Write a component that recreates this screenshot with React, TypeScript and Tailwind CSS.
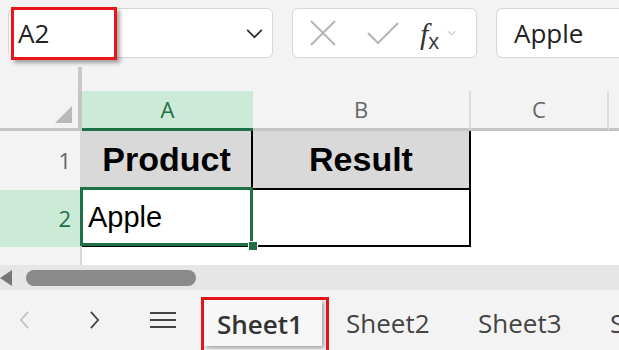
import React from 'react';

const ui = "font-['Open_Sans',sans-serif]";
const cell = "font-['Liberation_Sans',Arial,sans-serif]";

function Chevron({ className }: { className?: string }) {
  return (
    <svg viewBox="0 0 20 12" className={className} fill="none" stroke="currentColor" strokeWidth="2">
      <path d="M2 2 L10 10 L18 2" />
    </svg>
  );
}

function TopBar() {
  return (
    <div className="h-[91px] flex flex-col">
      <div className="flex items-start pt-[8px] pl-[8px] gap-[19px] h-[58px]">
        <div className="relative shrink-0 w-[265px] h-[50px] bg-white border border-[#d6d6d6] rounded-[6px] flex items-center pl-[9px] pr-[8px]">
          <span className={`${ui} text-[26px] text-[#222] flex-1`}>A2</span>
          <Chevron className="w-[19px] h-[11px] text-[#333]" />
          <div className="absolute left-[2px] top-[-2px] w-[106px] h-[53px] border-[3px] border-[#e8151b] shadow-[3px_3px_4px_rgba(0,0,0,0.35)]" />
        </div>
        <div className="shrink-0 w-[185px] h-[50px] bg-white border border-[#d6d6d6] rounded-[6px] flex items-center pl-[16px]">
          <svg viewBox="0 0 28 28" className="w-[28px] h-[28px] text-[#b5b5b5]" fill="none" stroke="currentColor" strokeWidth="2">
            <path d="M2 2 L26 26 M26 2 L2 26" />
          </svg>
          <svg viewBox="0 0 34 24" className="ml-[29px] w-[34px] h-[24px] text-[#b5b5b5]" fill="none" stroke="currentColor" strokeWidth="2">
            <path d="M2 12 L12 22 L32 2" />
          </svg>
          <span className="ml-[20px] flex items-end text-[#333] h-[30px]">
            <span className="font-['Liberation_Serif',serif] italic text-[30px] leading-[28px]">f</span>
            <span className={`${ui} text-[21px] leading-[20px] mb-[-3px]`}>x</span>
          </span>
          <Chevron className="ml-[8px] w-[9px] h-[6px] text-[#999]" />
        </div>
        <div className="flex-1 h-[50px] bg-white border border-[#d6d6d6] border-r-0 rounded-l-[6px] flex items-center pl-[17px]">
          <span className={`${ui} text-[26px] text-[#222]`}>Apple</span>
        </div>
      </div>
      <div className="h-[33px]">
        <div className="ml-[78px] mt-[9px] w-[4px] h-[24px] bg-[#c9c9c9]" />
      </div>
    </div>
  );
}

function HeaderRow() {
  return (
    <div className={`flex h-[40px] ${ui}`}>
      <div className="w-[82px] border-b-[3px] border-r-[4px] border-[#c4c4c4] flex items-end justify-end pr-[6px] pb-[5px]">
        <svg viewBox="0 0 16 16" className="w-[17px] h-[17px]">
          <path d="M16 0 L16 16 L0 16 Z" fill="#b9b9b9" />
        </svg>
      </div>
      <div className="w-[171px] bg-[#cbead7] border-b-[3px] border-[#1e7145] flex items-center justify-center text-[22px] text-[#1e7145]">
        A
      </div>
      <div className="w-[218px] border-b-[3px] border-r-2 border-r-[#dcdcdc] border-b-[#c4c4c4] flex items-center justify-center text-[22px] text-[#666]">
        B
      </div>
      <div className="w-[138px] border-b-[3px] border-r-2 border-r-[#dcdcdc] border-b-[#c4c4c4] flex items-center justify-center text-[22px] text-[#666]">
        C
      </div>
      <div className="flex-1 border-b-[3px] border-[#c4c4c4]" />
    </div>
  );
}

function Grid() {
  return (
    <div className="flex flex-col">
      <HeaderRow />
      <div className="flex h-[59px]">
        <div className={`w-[82px] border-r-2 border-[#d8d8d8] flex items-center justify-end pr-[9px] text-[22px] text-[#666] ${ui}`}>1</div>
        <div className={`w-[171px] bg-[#d9d9d9] border-r-2 border-b-2 border-black flex items-center justify-center ${cell} font-bold text-[34px] text-black`}>
          Product
        </div>
        <div className={`w-[218px] bg-[#d9d9d9] border-r-2 border-b-2 border-black flex items-center justify-center ${cell} font-bold text-[34px] text-black`}>
          Result
        </div>
        <div className="flex-1 bg-white" />
      </div>
      <div className="flex h-[57px]">
        <div className={`w-[82px] bg-[#cbead7] border-r-2 border-[#b8dcc6] flex items-center justify-end pr-[9px] text-[22px] text-[#1e7145] ${ui}`}>2</div>
        <div className={`relative w-[171px] bg-white border-b-2 border-black flex items-center pl-[6px] ${cell} text-[29px] text-black`}>
          Apple
          <div className="absolute left-[-2px] top-[-3px] right-0 bottom-[-1px] border-[3px] border-[#1e7145]" />
          <div className="absolute right-[-5px] bottom-[-6px] w-[10px] h-[10px] bg-[#1e7145] border border-white" />
        </div>
        <div className="w-[218px] bg-white border-r-2 border-b-2 border-black" />
        <div className="flex-1 bg-white" />
      </div>
      <div className="flex h-[18px]">
        <div className="w-[82px] border-r-2 border-[#d8d8d8]" />
        <div className="flex-1 bg-white" />
      </div>
    </div>
  );
}

function ScrollBar() {
  return (
    <div className="h-[25px] bg-[#e6e6e6] flex items-center">
      <svg viewBox="0 0 12 16" className="w-[12px] h-[16px]">
        <path d="M0 8 L12 0 L12 16 Z" fill="#777" />
      </svg>
      <div className="ml-[14px] w-[170px] h-[16px] rounded-full bg-[#8a8a8a]" />
    </div>
  );
}

function SheetTabs() {
  return (
    <div className={`h-[60px] flex items-start overflow-hidden ${ui}`}>
      <div className="shrink-0 flex items-center h-[52px] pt-[8px]">
        <svg viewBox="0 0 12 22" className="ml-[19px] w-[11px] h-[20px] text-[#c2c2c2]" fill="none" stroke="currentColor" strokeWidth="2">
          <path d="M10 2 L2 11 L10 20" />
        </svg>
        <svg viewBox="0 0 12 22" className="ml-[59px] w-[11px] h-[20px] text-[#444]" fill="none" stroke="currentColor" strokeWidth="2">
          <path d="M2 2 L10 11 L2 20" />
        </svg>
        <svg viewBox="0 0 26 18" className="ml-[50px] w-[26px] h-[18px] text-[#444]" fill="none" stroke="currentColor" strokeWidth="2">
          <path d="M0 2 H26 M0 9 H26 M0 16 H26" />
        </svg>
      </div>
      <div className="shrink-0 ml-[25px] mt-[7px] w-[128px] h-[56px] border-[3px] border-[#e8151b] flex pr-[4px] pb-[4px]">
        <div className="flex-1 bg-[#f7f7f7] shadow-[2px_2px_4px_rgba(0,0,0,0.35)] flex items-center pl-[13px] pt-[2px]">
          <span className="text-[26px] font-semibold text-[#333] leading-none">Sheet1</span>
        </div>
      </div>
      <div className="shrink-0 flex items-center h-[60px] pt-[5px] text-[26px] text-[#444] leading-none">
        <span className="ml-[17px] w-[132px]">Sheet2</span>
        <span className="w-[132px]">Sheet3</span>
        <span>Sheet4</span>
      </div>
    </div>
  );
}

export default function App() {
  return (
    <div className="w-[619px] h-[350px] overflow-hidden bg-[#f3f3f3] flex flex-col">
      <TopBar />
      <Grid />
      <ScrollBar />
      <SheetTabs />
    </div>
  );
}
